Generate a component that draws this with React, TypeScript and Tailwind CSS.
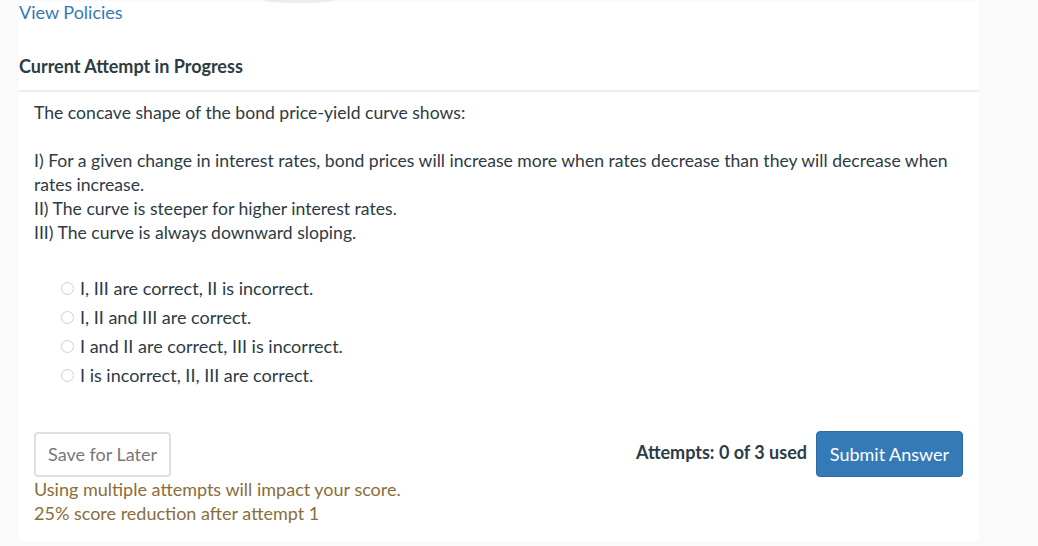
import React from "react";

const options = [
  "I, III are correct, II is incorrect.",
  "I, II and III are correct.",
  "I and II are correct, III is incorrect.",
  "I is incorrect, II, III are correct.",
];

export default function App() {
  return (
    <div
      className="h-[546px] w-[1038px] bg-[#fafafa] pt-px pl-[19px] overflow-hidden text-[18px]"
      style={{ fontFamily: "Lato, 'Open Sans', sans-serif" }}
    >
      <div className="relative w-[960px] h-[540px] bg-white">
        <div className="absolute -top-[3px] left-[245px] w-[70px] h-[5px] rounded-[50%] bg-[#ececec]" />
        <a className="block text-[18px] leading-[22px] text-[#337ab7]">View Policies</a>
        <div className="mt-[32px] text-[18px] leading-[22px] font-bold text-[#2d3b45]">
          Current Attempt in Progress
        </div>
        <div className="mt-[13px] h-[2px] bg-[#eeeeee]" />
        <div className="px-[15px] pt-[9px] text-[18px] leading-[24px] text-[#2d3b45]">
          <div className="text-[17.6px]">
            <p>The concave shape of the bond price-yield curve shows:</p>
            <p className="mt-[24px]">
              I) For a given change in interest rates, bond prices will increase more when rates decrease than they will decrease when rates increase.
              <br />
              II) The curve is steeper for higher interest rates.
              <br />
              III) The curve is always downward sloping.
            </p>
          </div>
          <ul className="mt-[31px] pl-[27px] flex flex-col gap-[5px]">
            {options.map((o) => (
              <li key={o} className="flex items-center h-[24px]">
                <span className="w-[13px] h-[13px] rounded-full border border-[#cfcfcf] bg-white mr-[6px] shrink-0" />
                <span>{o}</span>
              </li>
            ))}
          </ul>
          <div className="mt-[45px] flex items-start justify-between pr-px">
            <div>
              <button className="h-[45px] pb-px px-[12px] border-2 border-[#e0e0e0] rounded-[4px] text-[18px] text-[#777777] bg-white">
                Save for Later
              </button>
              <div className="text-[#8a6d3b] leading-[24px]">
                Using multiple attempts will impact your score.
                <br />
                25% score reduction after attempt 1
              </div>
            </div>
            <div className="flex items-start">
              <span className="mt-[8px] mr-[9px] font-bold text-[#2d3b45]">Attempts: 0 of 3 used</span>
              <button className="h-[46px] -mt-px pb-px bg-[#337ab7] border border-[#2e6da4] rounded-[4px] text-white text-[18px] w-[147px]">
                Submit Answer
              </button>
            </div>
          </div>
        </div>
      </div>
    </div>
  );
}
